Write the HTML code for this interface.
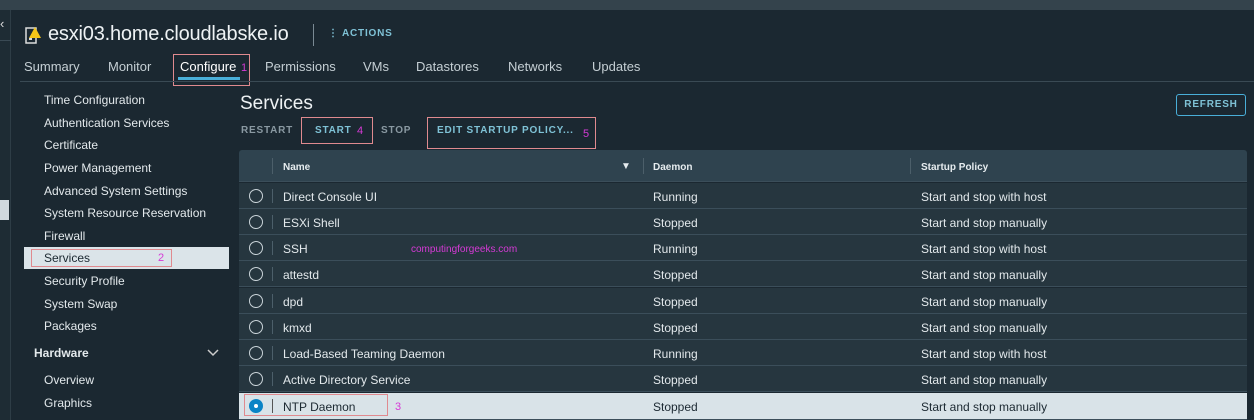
<!DOCTYPE html>
<html><head><style>
*{margin:0;padding:0;box-sizing:border-box}
body{width:1254px;height:420px;background:#1b2831;font-family:"Liberation Sans",sans-serif;color:#e6ecef;position:relative;overflow:hidden}
.a{position:absolute;white-space:nowrap}
.side{font-size:12px;color:#e3e9ec}
.row{position:absolute;left:239px;width:1008px;height:26px;border-bottom:1px solid #3b4e5a;background:#26363f;font-size:12px;color:#e3e9ec}
.row span{position:absolute;top:7px}
.rad{position:absolute;left:10px;top:6px;width:14px;height:14px;border:1.5px solid #c9d3d8;border-radius:50%}
.sep{position:absolute;left:33px;top:6px;width:1px;height:14px;background:#4c5f6a}
.box{position:absolute;border:1.5px solid #e08a8f}
.num{position:absolute;color:#d63ad6;font-size:11px}
</style></head><body>
<div class="a" style="left:0;top:0;width:1254px;height:10px;background:#34434c"></div>
<div class="a" style="left:0;top:10px;width:11px;height:410px;background:#1e2c34;border-right:1px solid #2e3d46"></div>
<div class="a" style="left:0;top:40px;width:11px;height:1px;background:#3a4a54"></div>
<div class="a" style="left:0;top:200px;width:9px;height:20px;background:#cfd8dd"></div>
<div class="a" style="left:0;top:16px;font-size:13px;color:#ddd">‹</div>
<svg class="a" style="left:24px;top:25px" width="18" height="20"><rect x="2" y="3" width="10" height="15" fill="none" stroke="#ddd" stroke-width="1.5"/><rect x="5" y="13" width="3" height="2" fill="#ddd"/><path d="M11 2 L17 13 L5 13 Z" fill="#f5c518"/></svg>
<div class="a" style="left:48px;top:23px;font-size:20px;color:#eef2f4;letter-spacing:-0.2px">esxi03.home.cloudlabske.io</div>
<div class="a" style="left:313px;top:24px;width:1px;height:22px;background:#7a8a94"></div>
<div class="a" style="left:328px;top:28px;font-size:10px;color:#7fc2d6;letter-spacing:.8px;font-weight:bold">⋮ ACTIONS</div>
<div class="a" style="left:24px;top:59px;font-size:13px;color:#c5cfd4">Summary</div>
<div class="a" style="left:108px;top:59px;font-size:13px;color:#c5cfd4">Monitor</div>
<div class="a" style="left:180px;top:59px;font-size:13px;color:#fff">Configure</div>
<div class="a" style="left:178px;top:77px;width:62px;height:3px;background:#49afd9"></div>
<div class="box" style="left:173px;top:54px;width:77px;height:32px"></div>
<div class="num" style="left:241px;top:62px">1</div>
<div class="a" style="left:265px;top:59px;font-size:13px;color:#c5cfd4">Permissions</div>
<div class="a" style="left:363px;top:59px;font-size:13px;color:#c5cfd4">VMs</div>
<div class="a" style="left:416px;top:59px;font-size:13px;color:#c5cfd4">Datastores</div>
<div class="a" style="left:508px;top:59px;font-size:13px;color:#c5cfd4">Networks</div>
<div class="a" style="left:592px;top:59px;font-size:13px;color:#c5cfd4">Updates</div>
<div class="a" style="left:20px;top:81px;width:1234px;height:1px;background:#3a4a54"></div>

<div class="a side" style="left:44px;top:93px">Time Configuration</div>
<div class="a side" style="left:44px;top:116px">Authentication Services</div>
<div class="a side" style="left:44px;top:138px">Certificate</div>
<div class="a side" style="left:44px;top:161px">Power Management</div>
<div class="a side" style="left:44px;top:184px">Advanced System Settings</div>
<div class="a side" style="left:44px;top:206px">System Resource Reservation</div>
<div class="a side" style="left:44px;top:229px">Firewall</div>
<div class="a" style="left:24px;top:247px;width:205px;height:22px;background:#dbe4e9"></div>
<div class="box" style="left:31px;top:249px;width:141px;height:18px"></div>
<div class="a side" style="left:44px;top:251px;color:#1b2831">Services</div>
<div class="num" style="left:158px;top:252px">2</div>
<div class="a side" style="left:44px;top:274px">Security Profile</div>
<div class="a side" style="left:44px;top:297px">System Swap</div>
<div class="a side" style="left:44px;top:319px">Packages</div>
<div class="a side" style="left:34px;top:346px;font-weight:bold">Hardware</div>
<svg class="a" style="left:207px;top:349px" width="12" height="8"><path d="M1 1 L6 6 L11 1" fill="none" stroke="#ccc" stroke-width="1.5"/></svg>
<div class="a side" style="left:44px;top:373px">Overview</div>
<div class="a side" style="left:44px;top:396px">Graphics</div>

<div class="a" style="left:240px;top:93px;font-size:19px;color:#eef2f4">Services</div>
<div class="a" style="left:1176px;top:94px;width:70px;height:22px;border:1px solid #49afd9;border-radius:3px;font-size:10px;color:#7fc2d6;text-align:center;line-height:20px;letter-spacing:.8px;font-weight:bold">REFRESH</div>
<div class="a" style="left:241px;top:125px;font-size:10px;color:#8a99a2;letter-spacing:.8px;font-weight:bold">RESTART</div>
<div class="box" style="left:301px;top:117px;width:72px;height:27px"></div>
<div class="a" style="left:315px;top:125px;font-size:10px;color:#7fc2d6;letter-spacing:.8px;font-weight:bold">START</div>
<div class="num" style="left:357px;top:125px">4</div>
<div class="a" style="left:381px;top:125px;font-size:10px;color:#8a99a2;letter-spacing:.8px;font-weight:bold">STOP</div>
<div class="box" style="left:427px;top:117px;width:169px;height:32px"></div>
<div class="a" style="left:437px;top:125px;font-size:10px;color:#7fc2d6;letter-spacing:.8px;font-weight:bold">EDIT STARTUP POLICY...</div>
<div class="num" style="left:583px;top:128px">5</div>

<div class="a" style="left:239px;top:150px;width:1008px;height:32px;background:#2f434f;border-bottom:1px solid #3b4e5a;border-radius:3px 3px 0 0;font-size:10px;font-weight:bold;color:#e6ecef">
<div class="a" style="left:33px;top:8px;width:1px;height:16px;background:#4c5f6a"></div>
<span class="a" style="left:44px;top:12px">Name</span>
<span class="a" style="left:382px;top:11px">▼</span>
<div class="a" style="left:404px;top:8px;width:1px;height:16px;background:#4c5f6a"></div>
<span class="a" style="left:414px;top:12px">Daemon</span>
<div class="a" style="left:671px;top:8px;width:1px;height:16px;background:#4c5f6a"></div>
<span class="a" style="left:682px;top:12px">Startup Policy</span>
</div>

<div class="row" style="top:183px"><div class="rad"></div><div class="sep"></div><span style="left:44px">Direct Console UI</span><span style="left:414px">Running</span><span style="left:682px">Start and stop with host</span></div>
<div class="row" style="top:209px"><div class="rad"></div><div class="sep"></div><span style="left:44px">ESXi Shell</span><span style="left:414px">Stopped</span><span style="left:682px">Start and stop manually</span></div>
<div class="row" style="top:235px"><div class="rad"></div><div class="sep"></div><span style="left:44px">SSH</span><span style="left:172px;top:9px;font-size:10px;color:#d63ad6">computingforgeeks.com</span><span style="left:414px">Running</span><span style="left:682px">Start and stop with host</span></div>
<div class="row" style="top:261px"><div class="rad"></div><div class="sep"></div><span style="left:44px">attestd</span><span style="left:414px">Stopped</span><span style="left:682px">Start and stop manually</span></div>
<div class="row" style="top:288px"><div class="rad"></div><div class="sep"></div><span style="left:44px">dpd</span><span style="left:414px">Stopped</span><span style="left:682px">Start and stop manually</span></div>
<div class="row" style="top:314px"><div class="rad"></div><div class="sep"></div><span style="left:44px">kmxd</span><span style="left:414px">Stopped</span><span style="left:682px">Start and stop manually</span></div>
<div class="row" style="top:340px"><div class="rad"></div><div class="sep"></div><span style="left:44px">Load-Based Teaming Daemon</span><span style="left:414px">Running</span><span style="left:682px">Start and stop with host</span></div>
<div class="row" style="top:366px"><div class="rad"></div><div class="sep"></div><span style="left:44px">Active Directory Service</span><span style="left:414px">Stopped</span><span style="left:682px">Start and stop manually</span></div>
<div class="row" style="top:393px;height:27px;background:#d9e3e8;color:#1b2831"><div class="rad" style="background:#0a84c6;border-color:#0a84c6;top:6px"><div style="width:4px;height:4px;background:#fff;border-radius:50%;margin:3.5px"></div></div><div class="sep" style="background:#555"></div><span style="left:44px">NTP Daemon</span><span style="left:414px">Stopped</span><span style="left:682px">Start and stop manually</span></div>
<div class="box" style="left:244px;top:394px;width:144px;height:22px"></div>
<div class="num" style="left:395px;top:401px">3</div>
</body></html>
